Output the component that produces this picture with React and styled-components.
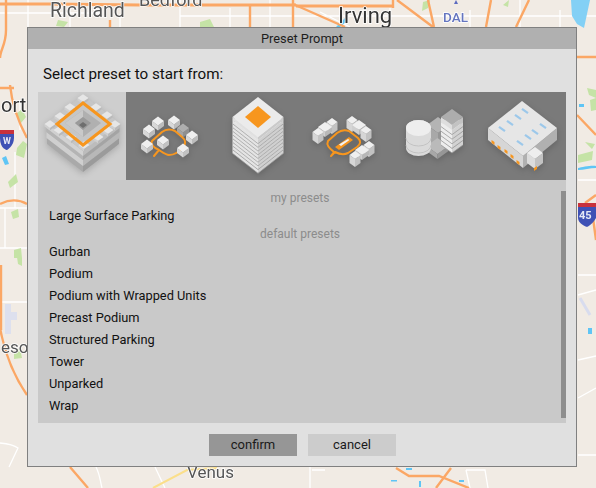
import React from "react";
import styled, { createGlobalStyle } from "styled-components";

const Global = createGlobalStyle`
  html, body { margin: 0; padding: 0; }
  body { width: 596px; height: 488px; overflow: hidden; background: #f1ebe4; font-family: Roboto, "Liberation Sans", sans-serif; }
`;

const Page = styled.div`
  position: relative;
  width: 596px;
  height: 488px;
  overflow: hidden;
`;

const MapSvg = styled.svg`
  position: absolute;
  inset: 0;
  display: block;
  filter: blur(0.4px);
`;

const Modal = styled.section`
  position: absolute;
  left: 27px;
  top: 27px;
  box-sizing: border-box;
  width: 550px;
  height: 440px;
  border: 1px solid #808080;
  background: #e0e0e0;
  display: flex;
  flex-direction: column;
`;

const TitleBar = styled.header`
  height: 21px;
  flex: none;
  background: #b0b0b0;
  color: #1e1e1e;
  font-size: 12.8px;
  line-height: 21px;
  text-align: center;
`;

const Body = styled.div`
  flex: 1;
  display: flex;
  flex-direction: column;
  padding: 0 10px;
  min-height: 0;
`;

const Heading = styled.h2`
  margin: 0;
  height: 43px;
  padding-left: 5px;
  font-size: 15.2px;
  font-weight: 400;
  line-height: 50px;
  color: #111;
`;

const Strip = styled.div`
  display: grid;
  grid-template-columns: repeat(6, 88px);
  height: 88px;
  background: #7a7a7a;
  flex: none;
`;

const Thumb = styled.div`
  width: 88px;
  height: 88px;
  background: ${(p) => (p.$selected ? "#cecece" : "transparent")};
  svg { display: block; filter: blur(0.45px) drop-shadow(0 2px 3px rgba(0, 0, 0, 0.18)); }
`;

const ListPanel = styled.div`
  position: relative;
  height: 243px;
  flex: none;
  box-sizing: border-box;
  padding: 11px 0 0 11px;
  background: #c9c9c9;
`;

const Scrollbar = styled.div`
  position: absolute;
  right: 0;
  top: 11px;
  width: 5px;
  height: 227px;
  background: #8e8e8e;
`;

const GroupLabel = styled.div`
  height: 14px;
  line-height: 14px;
  font-size: 12px;
  color: #8c8c8c;
  text-align: center;
  padding-right: 15px;
`;

const Item = styled.div`
  height: 22px;
  line-height: 22px;
  font-size: 12.8px;
  color: #111;
`;

const Footer = styled.footer`
  display: flex;
  justify-content: center;
  gap: 11px;
  padding-top: 11px;
`;

const Button = styled.button`
  width: 88px;
  height: 22px;
  border: 0;
  padding: 0 0 2px 1px;
  font-family: inherit;
  font-size: 13px;
  color: #1a1a1a;
  background: ${(p) => (p.$primary ? "#969696" : "#cccccc")};
`;

const O = "#f7961e";

function Box({ x, y, w, h, d, top = "#efefef", left = "#d6d6d6", right = "#c2c2c2" }) {
  return (
    <g>
      <polygon points={`${x - w},${y} ${x},${y + h} ${x},${y + h + d} ${x - w},${y + d}`} fill={left} />
      <polygon points={`${x + w},${y} ${x},${y + h} ${x},${y + h + d} ${x + w},${y + d}`} fill={right} />
      <polygon points={`${x},${y - h} ${x + w},${y} ${x},${y + h} ${x - w},${y}`} fill={top} />
    </g>
  );
}

const Frame = ({ children }) => (
  <svg width="88" height="88" viewBox="0 0 88 88">{children}</svg>
);

function Podium() {
  return (
    <Frame>
      <Box x={45} y={45} w={36} h={28} d={7} left="#a9a9a9" right="#9b9b9b" top="#c0c0c0" />
      <Box x={45} y={40} w={36.5} h={28} d={6} left="#cfcfcf" right="#b8b8b8" top="#bdbdbd" />
      <Box x={45} y={35} w={36.5} h={28} d={5} left="#b4b4b4" right="#a4a4a4" top="#bbbbbb" />
      <Box x={45} y={31} w={36.5} h={28} d={5} left="#d2d2d2" right="#bcbcbc" top="#c6c6c6" />
      <polygon points="45,18 63,31 45,45 27,31" fill="#b0b0b0" />
      <polygon points="45,18 27,31 45,45 45,38 37,31 45,25" fill="#c9c9c9" />
      <polygon points="45,25 53,31 45,38 37,31" fill="#9a9a9a" />
      <polygon points="45,30 49,33 45,36 41,33" fill="#6e6e6e" />
      {[[45,6],[58,15],[69,23],[77,32],[32,15],[22,24],[12,32],[60,45],[46,53],[33,45],[21,38],[70,38]].map(([x,y],i)=>(
        <Box key={i} x={x} y={y} w={5.5} h={3.8} d={2.5} top="#e6e6e6" left="#cfcfcf" right="#bababa" />
      ))}
      <polygon points="45,11 72,32 45,53 19,32" fill="none" stroke={O} strokeWidth="3" />
    </Frame>
  );
}

function Blocks() {
  const back = [[23,39],[32,31],[48,30],[57,38],[66,45]];
  const front = [[21,54],[37,50],[57,58]];
  return (
    <Frame>
      {back.map(([x,y],i)=><Box key={i} x={x} y={y-2} w={6} h={4.5} d={5} left={i===3?"#a4a4a4":"#d8d8d8"} right={i===3?"#8f8f8f":"#bcbcbc"} top={i===3?"#aeaeae":"#efefef"} />)}
      <path d="M28 64 L33 58 C28 56 24 52 26 49 L36 40 C40 37 45 37 49 39 L56 45 C60 48 60 52 57 55 C53 60 48 63 43 63 C40 63 36 60 33 58 Z" fill="none" stroke={O} strokeWidth="2" strokeLinejoin="round" />
      {front.map(([x,y],i)=><Box key={i} x={x} y={y-2} w={6} h={4.5} d={5} />)}
    </Frame>
  );
}

function Tower() {
  const layers = Array.from({ length: 9 }, (_, i) => i);
  return (
    <Frame>
      {layers.reverse().map((i) => (
        <g key={i}>
          <Box x={44} y={28 + i * 3.7} w={25.5} h={20} d={3.7} top="#ececec" left="#e4e4e4" right="#d0d0d0" />
          <polyline points={`18.5,${31.7 + i * 3.7} 44,${51.7 + i * 3.7} 69.5,${31.7 + i * 3.7}`} fill="none" stroke="#9a9a9a" strokeWidth="0.7" />
        </g>
      ))}
      <Box x={44} y={25} w={25.5} h={20} d={3} top="#ebebeb" left="#e0e0e0" right="#cacaca" />
      <polygon points="44,14 57,25 44,36 31,25" fill={O} />
    </Frame>
  );
}

function HBlock({ x, y, flip }) {
  const s = flip ? -1 : 1;
  return (
    <g>
      <Box x={x - 7 * s} y={y - 5} w={5.5} h={4} d={8} />
      <Box x={x} y={y} w={7} h={5} d={5} left="#cfcfcf" right="#b8b8b8" />
      <Box x={x + 7 * s} y={y + 5} w={5.5} h={4} d={8} />
    </g>
  );
}

function Wrapped() {
  return (
    <Frame>
      <HBlock x={23} y={35} flip />
      <HBlock x={57} y={33} />
      <HBlock x={60} y={58} flip />
      <path d="M29 64 L32 60 C27 56 24 53 26 49 L35 41 C39 38 44 38 47 39 L56 46 C59 49 59 52 55 55 L46 61 C42 63 37 62 33 60 Z" fill="#6c6c6c" stroke={O} strokeWidth="2" strokeLinejoin="round" />
      <polygon points="33,55 47,45 51,48 37,58" fill={O} />
      <polygon points="37,52.5 46,47 47.5,48 39,54" fill="#f4f4f4" />
    </Frame>
  );
}

function Mixed() {
  return (
    <Frame>
      <Box x={48} y={33} w={11} h={8} d={18} top="#b4b4b4" left="#a8a8a8" right="#959595" />
      <Box x={47.5} y={54} w={11} h={8} d={5} top="#bababa" left="#a8a8a8" right="#969696" />
      <g>
        <path d="M16 36 A12.5 8 0 0 1 41 36 L41 56 A12.5 8 0 0 1 16 56 Z" fill="#dadada" />
        <ellipse cx="28.5" cy="36" rx="12.5" ry="8" fill="#eeeeee" />
        <path d="M16 46 A12.5 8 0 0 0 41 46 M16 53 A12.5 8 0 0 0 41 53" fill="none" stroke="#bdbdbd" strokeWidth="0.8" />
      </g>
      {[4,3,2,1,0].map((i) => (
        <g key={i}>
          <Box x={62} y={30 + i * 4.6} w={11} h={8} d={4.6} top="#efefef" left="#ededed" right="#d2d2d2" />
          <polyline points={`51,${34.6 + i * 4.6} 62,${42.6 + i * 4.6} 73,${34.6 + i * 4.6}`} fill="none" stroke="#8f8f8f" strokeWidth="0.7" />
        </g>
      ))}
      <Box x={62} y={25} w={11} h={8} d={5} top="#adadad" left="#dedede" right="#c2c2c2" />
    </Frame>
  );
}

function Slab() {
  const wins = [[47,19],[40,25],[32,31],[24,37],[65,34],[57,40],[50,45],[42,51]];
  const lights = [[15,50],[21,55],[28,59],[34,64],[40,70]];
  return (
    <Frame>
      <polygon points="10,36 45,64 45,76 10,48" fill="#d6d6d6" />
      <polygon points="79,36 45,64 45,76 79,48" fill="#b0b0b0" />
      <polygon points="44,9 79,36 45,64 10,36" fill="#e6e6e6" />
      {wins.map(([x,y],i)=>(
        <line key={i} x1={x-3} y1={y-2.2} x2={x+3} y2={y+2.2} stroke="#9cc8ea" strokeWidth="2.2" />
      ))}
      {lights.map(([x,y],i)=>(
        <polygon key={i} points={`${x-1.5},${y-2} ${x+1.5},${y} ${x+1.5},${y+3} ${x-1.5},${y+1}`} fill={O} />
      ))}
      <Box x={57} y={61} w={8} h={6} d={10} top="#eeeeee" left="#dcdcdc" right="#c2c2c2" />
      <polygon points="56,76 59,74 59,77 56,79" fill={O} />
    </Frame>
  );
}

function MapLayer() {
  const R = { fill: "none", stroke: "#fba765", strokeWidth: 2.4 };
  const W = { fill: "none", stroke: "#ffffff", strokeWidth: 1.3 };
  const L = { fontFamily: "Roboto, sans-serif", fill: "#555", stroke: "#fff", strokeWidth: 1.5, paintOrder: "stroke" };
  return (
    <MapSvg width="596" height="488" viewBox="0 0 596 488">
      <rect width="596" height="488" fill="#f1ebe4" />
      <g {...W}>
        <path d="M0 13H100 M180 16H596 M28 0V27 M70 5V27 M120 14V27 M180 0V27 M230 8V27 M270 0V27 M320 12L350 27 M390 8V27 M470 10V27 M520 0V27 M560 10V27" />
        <path d="M15 152V208 M5 208V248 M0 248H27 M0 302H27 M0 208H27 M20 100V130" />
        <path d="M578 275H596 M578 295L596 290 M578 360L596 356 M578 398L596 388 M578 180H596" />
        <path d="M0 443C10 444 14 445 18 448L9 467 M96 467C100 475 100 480 102 488 M155 467L165 488 M310 467V488 M312 470H325 M466 470L470 488 M466 470H485L488 488 M578 455H596" />
      </g>
      <g fill="#c5e3a6" stroke="none">
        <path d="M58 20l10 2 -4 5 -8-1z M200 22l10-3 4 8-14 0z M423 2l7-2 -2 8-6 3z M503 5l6-5 -1 7z" />
        <path d="M16 114l6-5 4 8-5 6z M17 148l6-7 4 3-3 14-8-3z M8 182l8-8 2 8-8 6z M11 212l7-3 1 8-6 2z" />
        <path d="M578 155l15-4-1 9-14 3z M590 100l6-2v12l-5 1z M585 142l10 2-3 5z M587 88l9 2v8l-7-3z" />
        <path d="M14 352l6-4 2 10-8 1z M14 250l7-2 1 10-8 0z M17 257l5 1v8l-4-2z" />
      </g>
      <g fill="#83d0f5" stroke="none">
        <path d="M571 0h19l-3 14 -3 14 -7 -4 -5 -8z" />
      </g>
      <g fill="#5fc5f5" stroke="none">
        <path d="M2 158l4-2 3 8-4 1z M336 27l9-9 2 3-7 6z" />
        <path d="M578 168c4-1 14-3 18-2v2c-6 0-12 2-18 2z M579 104l5 0 0 3-5 0z M588 328h4v6h-4z M406 468h6v2h-6z M391 480h6v1.5h-6z M419 481h2v6h-2z M459 480h5v2h-5z" />
      </g>
      <path d="M153 488L187 470L217 468" stroke="#fbdf8a" strokeWidth="2" fill="none" />
      <path {...R} strokeWidth="2.8" d="M0 4H50 M50 4L140 5H296 M296 6H393" />
      <path {...R} d="M6 0V30C6 45 0 50 0 58 M0 88H14" />
      <path {...R} d="M110 20V27 M250 5V27 M293 0V27 M293 4L345 27 M393 0V8 M397 0L433 27 M428 0L434 27 M491 0L486 27 M529 0L516 27" />
      <path {...R} d="M10 85C12 105 20 125 27 138 M0 204C10 199 20 200 27 204 M1 265V330 M0 328C6 360 18 382 27 395" />
      <path {...R} d="M577 115L596 135 M585 203L596 195 M593 218L596 240 M577 57H596" />
      <path {...R} d="M70 467L88 488 M396 468L409 476H439L469 488 M451 468L436 488" />
      <g>
        <path d="M0 132h14v6c0 8-7 12-7 12s-7-1-7-12z" fill="#3f51b5" />
        <rect x="0" y="130" width="14" height="4" fill="#c8313c" />
        <text x="3" y="144" fontSize="9" fontWeight="700" fill="#e6e8f5" fontFamily="Roboto, sans-serif">W</text>
        <path d="M578 205h18v13c-3 6-9 9-9 9s-9-3-9-9z" fill="#3f51b5" />
        <rect x="578" y="203" width="18" height="4" fill="#c8313c" />
        <text x="579" y="219" fontSize="11" fontWeight="700" fill="#e6e8f5" fontFamily="Roboto, sans-serif">45</text>
      </g>
      <path d="M5 304h6v8h6v8h-6v14h-6z" fill="#dde0ee" />
      <path d="M580 298L590 315" stroke="#d8dcee" strokeWidth="3" />
      <path d="M456 0l2 4 -4 0z" fill="#5c6bc0" />
      <text x="50" y="17" fontSize="19.5" {...L}>Richland</text>
      <text x="139" y="6" fontSize="18" {...L}>Bedford</text>
      <text x="338" y="23" fontSize="22" {...L} fill="#333">Irving</text>
      <text x="443" y="22" fontSize="13.5" fontWeight="500" {...L} fill="#6575bf">DAL</text>
      <text x="1" y="112" fontSize="20" {...L} fill="#333">ort</text>
      <text x="1" y="353" fontSize="17" {...L}>eso</text>
      <text x="187" y="478" fontSize="17" {...L}>Venus</text>
    </MapSvg>
  );
}

const thumbs = [Podium, Blocks, Tower, Wrapped, Mixed, Slab];
const mine = ["Large Surface Parking"];
const defaults = ["Gurban", "Podium", "Podium with Wrapped Units", "Precast Podium", "Structured Parking", "Tower", "Unparked", "Wrap"];

export default function App() {
  return (
    <Page>
      <Global />
      <MapLayer />
      <Modal>
        <TitleBar>Preset Prompt</TitleBar>
        <Body>
          <Heading>Select preset to start from:</Heading>
          <Strip>
            {thumbs.map((T, i) => (
              <Thumb key={i} $selected={i === 0}><T /></Thumb>
            ))}
          </Strip>
          <ListPanel>
            <GroupLabel>my presets</GroupLabel>
            {mine.map((n) => <Item key={n}>{n}</Item>)}
            <GroupLabel>default presets</GroupLabel>
            {defaults.map((n) => <Item key={n}>{n}</Item>)}
            <Scrollbar />
          </ListPanel>
          <Footer>
            <Button $primary>confirm</Button>
            <Button>cancel</Button>
          </Footer>
        </Body>
      </Modal>
    </Page>
  );
}
